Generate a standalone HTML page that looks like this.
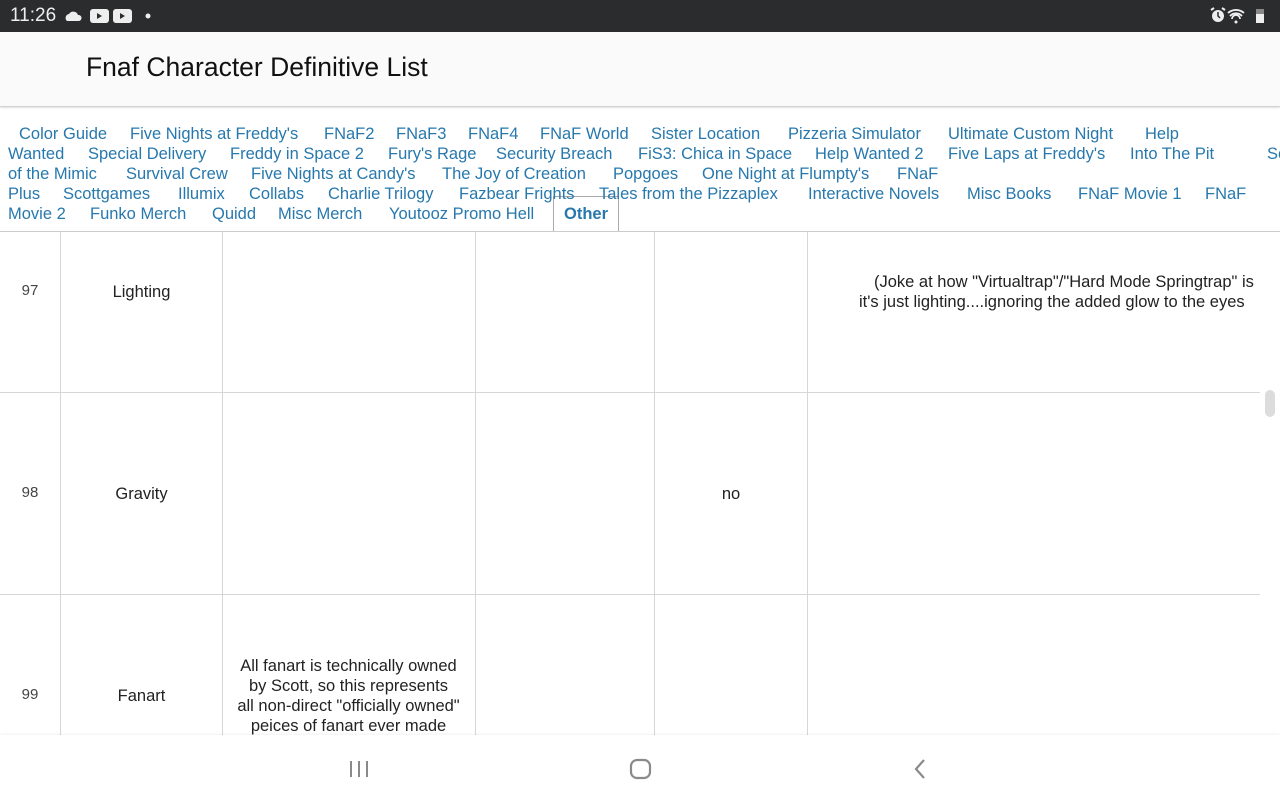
<!DOCTYPE html>
<html><head><meta charset="utf-8"><style>
*{margin:0;padding:0;box-sizing:border-box}
body{width:1280px;height:800px;position:relative;overflow:hidden;background:#fff;font-family:"Liberation Sans",sans-serif}
.sb{position:absolute;left:0;top:0;width:1280px;height:32px;background:#2b2c2e;color:#eee}
.hdr{position:absolute;left:0;top:32px;width:1280px;height:75px;background:#fafafa;border-bottom:1px solid #d0d0d0;box-shadow:0 1px 2px rgba(0,0,0,.12)}
.t{position:absolute;white-space:nowrap;font-size:16.5px;color:#2778ad;line-height:20px}
.c{position:absolute;white-space:nowrap;font-size:16.5px;color:#222;line-height:20px}
.vl{position:absolute;top:232px;width:1px;height:503px;background:#d6d6d6}
.hl{position:absolute;left:0;width:1260px;height:1px;background:#d6d6d6}
.nav{position:absolute;left:0;top:735px;width:1280px;height:65px;background:#fff;box-shadow:0 -1px 3px rgba(0,0,0,.06)}
</style></head><body>
<div class="sb">
<div style="position:absolute;left:10px;top:5px;font-size:19px;color:#eee">11:26</div>
<svg style="position:absolute;left:64px;top:8px" width="100" height="16">
<path d="M3 13 a4 4 0 0 1 2-7 a5 5 0 0 1 9 1 a3 3 0 0 1 1 6z" fill="#eee"/>
<rect x="26" y="1" width="19" height="14" rx="3" fill="#eee"/><path d="M33 5 l5 3 -5 3z" fill="#2b2c2e"/>
<rect x="49" y="1" width="19" height="14" rx="3" fill="#eee"/><path d="M56 5 l5 3 -5 3z" fill="#2b2c2e"/>
<circle cx="84" cy="8" r="2.5" fill="#eee"/></svg>
<svg style="position:absolute;left:1208px;top:6px" width="64" height="20">
<circle cx="10" cy="10" r="6" fill="#eee"/><path d="M10 6v4l2 2" stroke="#2b2c2e" stroke-width="1.5" fill="none"/><path d="M3 4l3-2M17 4l-3-2" stroke="#eee" stroke-width="2"/>
<path d="M20 7a12 12 0 0 1 16 0M22 10a8 8 0 0 1 12 0M24 13a4 4 0 0 1 8 0" stroke="#eee" stroke-width="1.8" fill="none"/><circle cx="28" cy="16" r="1.5" fill="#eee"/>
<rect x="48" y="3" width="8" height="14" fill="#888"/><rect x="48" y="8" width="8" height="9" fill="#eee"/></svg>
</div>
<div class="hdr"><div style="position:absolute;left:86px;top:20px;font-size:26.5px;color:#111">Fnaf Character Definitive List</div></div>

<div style="position:absolute;left:553px;top:196px;width:66px;height:36px;border:1px solid #aaa;border-bottom:none;background:#fff"></div>

<div class="t" style="left:19px;top:124px">Color Guide</div><div class="t" style="left:130px;top:124px">Five Nights at Freddy's</div><div class="t" style="left:324px;top:124px">FNaF2</div><div class="t" style="left:396px;top:124px">FNaF3</div><div class="t" style="left:468px;top:124px">FNaF4</div><div class="t" style="left:540px;top:124px">FNaF World</div><div class="t" style="left:651px;top:124px">Sister Location</div><div class="t" style="left:788px;top:124px">Pizzeria Simulator</div><div class="t" style="left:948px;top:124px">Ultimate Custom Night</div><div class="t" style="left:1145px;top:124px">Help</div>
<div class="t" style="left:8px;top:144px">Wanted</div><div class="t" style="left:88px;top:144px">Special Delivery</div><div class="t" style="left:230px;top:144px">Freddy in Space 2</div><div class="t" style="left:388px;top:144px">Fury's Rage</div><div class="t" style="left:496px;top:144px">Security Breach</div><div class="t" style="left:638px;top:144px">FiS3: Chica in Space</div><div class="t" style="left:815px;top:144px">Help Wanted 2</div><div class="t" style="left:948px;top:144px">Five Laps at Freddy's</div><div class="t" style="left:1130px;top:144px">Into The Pit</div><div class="t" style="left:1267px;top:144px">Secret</div>
<div class="t" style="left:8px;top:164px">of the Mimic</div><div class="t" style="left:126px;top:164px">Survival Crew</div><div class="t" style="left:251px;top:164px">Five Nights at Candy's</div><div class="t" style="left:442px;top:164px">The Joy of Creation</div><div class="t" style="left:613px;top:164px">Popgoes</div><div class="t" style="left:702px;top:164px">One Night at Flumpty's</div><div class="t" style="left:897px;top:164px">FNaF</div>
<div class="t" style="left:8px;top:184px">Plus</div><div class="t" style="left:63px;top:184px">Scottgames</div><div class="t" style="left:178px;top:184px">Illumix</div><div class="t" style="left:249px;top:184px">Collabs</div><div class="t" style="left:328px;top:184px">Charlie Trilogy</div><div class="t" style="left:459px;top:184px">Fazbear Frights</div><div class="t" style="left:599px;top:184px">Tales from the Pizzaplex</div><div class="t" style="left:808px;top:184px">Interactive Novels</div><div class="t" style="left:967px;top:184px">Misc Books</div><div class="t" style="left:1078px;top:184px">FNaF Movie 1</div><div class="t" style="left:1205px;top:184px">FNaF</div>
<div class="t" style="left:8px;top:204px">Movie 2</div><div class="t" style="left:90px;top:204px">Funko Merch</div><div class="t" style="left:212px;top:204px">Quidd</div><div class="t" style="left:278px;top:204px">Misc Merch</div><div class="t" style="left:389px;top:204px">Youtooz Promo Hell</div><div class="t" style="left:564px;top:204px;font-weight:bold">Other</div>

<div class="hl" style="top:231px;width:1280px;left:0;height:1px;background:#ccc"></div>
<div class="hl" style="top:392px"></div>
<div class="hl" style="top:594px"></div>
<div class="vl" style="left:60px"></div><div class="vl" style="left:222px"></div><div class="vl" style="left:475px"></div><div class="vl" style="left:654px"></div><div class="vl" style="left:807px"></div>

<div class="c" style="left:0;width:60px;text-align:center;top:281px;font-size:15px;color:#444">97</div>
<div class="c" style="left:61px;width:161px;text-align:center;top:282px">Lighting</div>
<div style="position:absolute;left:808px;top:270px;width:452px;height:42px;overflow:hidden">
<div class="c" style="left:66px;top:2px">(Joke at how "Virtualtrap"/"Hard Mode Springtrap" is</div>
<div class="c" style="left:51px;top:22px">it's just lighting....ignoring the added glow to the eyes</div></div>

<div class="c" style="left:0;width:60px;text-align:center;top:483px;font-size:15px;color:#444">98</div>
<div class="c" style="left:61px;width:161px;text-align:center;top:484px">Gravity</div>
<div class="c" style="left:655px;width:152px;text-align:center;top:484px">no</div>

<div class="c" style="left:0;width:60px;text-align:center;top:685px;font-size:15px;color:#444">99</div>
<div class="c" style="left:61px;width:161px;text-align:center;top:686px">Fanart</div>
<div style="position:absolute;left:222px;top:656px;width:253px;text-align:center;font-size:16.5px;line-height:20px;color:#222;white-space:nowrap">All fanart is technically owned<br>by Scott, so this represents<br>all non-direct "officially owned"<br>peices of fanart ever made</div>

<div style="position:absolute;left:1265px;top:390px;width:10px;height:27px;border-radius:5px;background:#dcdcdc"></div>

<div class="nav">
<svg style="position:absolute;left:348px;top:24px" width="24" height="20"><path d="M3 2v16M11 2v16M19 2v16" stroke="#8a8a8a" stroke-width="2"/></svg>
<svg style="position:absolute;left:628px;top:22px" width="26" height="24"><rect x="3" y="3" width="19" height="18" rx="6" stroke="#8a8a8a" stroke-width="2.2" fill="none"/></svg>
<svg style="position:absolute;left:910px;top:22px" width="20" height="24"><path d="M14 3l-8 9 8 9" stroke="#8a8a8a" stroke-width="2.2" fill="none"/></svg>
</div>
</body></html>
